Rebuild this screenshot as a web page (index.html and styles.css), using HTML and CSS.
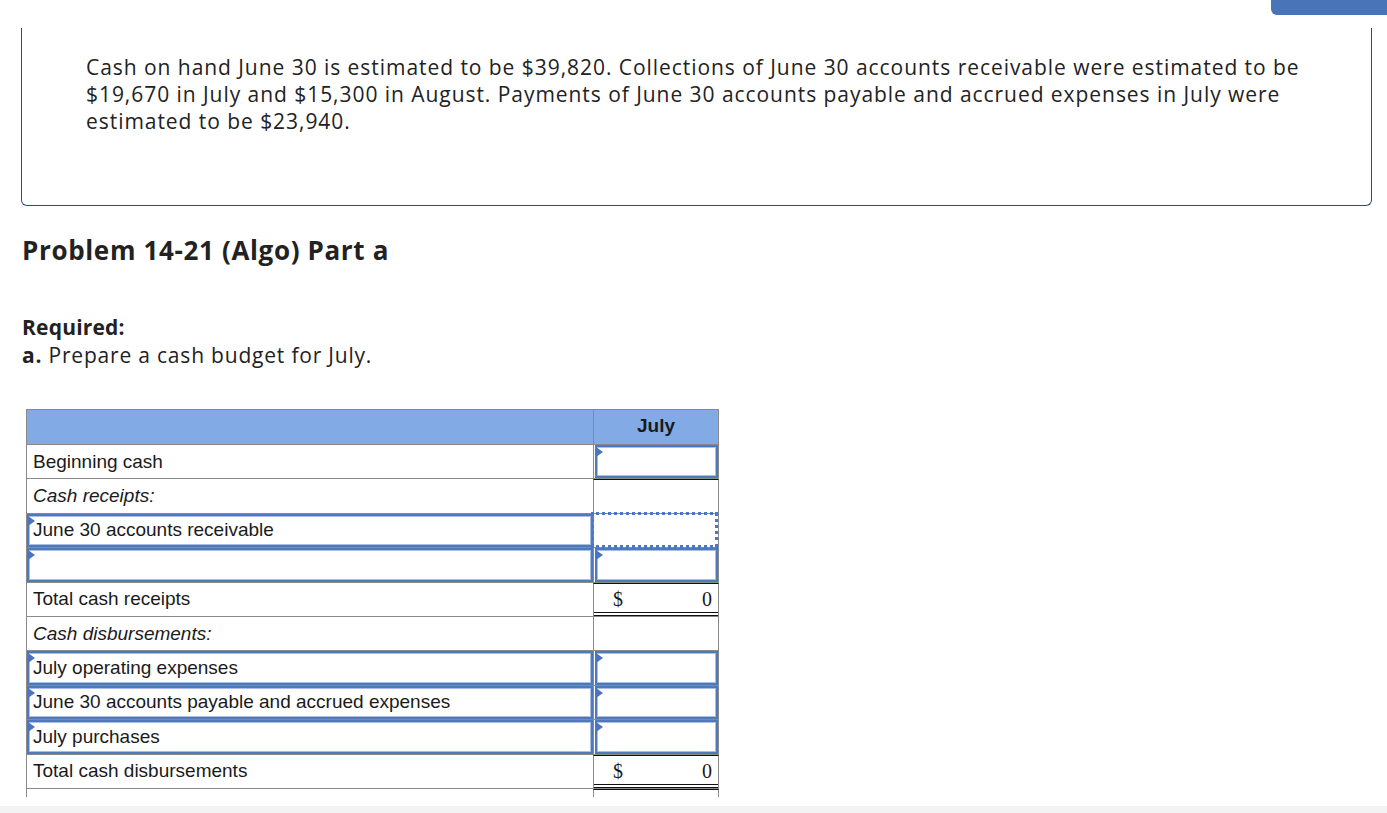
FILE: index.html
```html
<!DOCTYPE html>
<html lang="en">
<head>
<meta charset="utf-8">
<title>Problem 14-21 (Algo) Part a</title>
<link rel="stylesheet" href="styles.css">
</head>
<body>
<div class="tab"></div>
<div class="viewport">
  <div class="intro">
    <p>Cash on hand June 30 is estimated to be $39,820. Collections of June 30 accounts receivable were estimated to be $19,670 in July and $15,300 in August. Payments of June 30 accounts payable and accrued expenses in July were estimated to be $23,940.</p>
  </div>

  <h2 class="title">Problem 14-21 (Algo) Part a</h2>

  <div class="required">
    <div class="req-label">Required:</div>
    <div><b>a.</b> Prepare a cash budget for July.</div>
  </div>

  <div class="sheet">
    <div class="row head">
      <div class="cell label"></div>
      <div class="cell val">July</div>
    </div>
    <div class="row">
      <div class="cell label">Beginning cash</div>
      <div class="cell val"><div class="inp"><span class="tri"></span></div></div>
    </div>
    <div class="row">
      <div class="cell label"><i>Cash receipts:</i></div>
      <div class="cell val topline"></div>
    </div>
    <div class="row">
      <div class="cell label"><div class="inp wide"><span class="tri"></span>June 30 accounts receivable</div></div>
      <div class="cell val"><div class="focus"></div></div>
    </div>
    <div class="row">
      <div class="cell label"><div class="inp wide"><span class="tri"></span></div></div>
      <div class="cell val"><div class="inp"><span class="tri"></span></div></div>
    </div>
    <div class="row">
      <div class="cell label">Total cash receipts</div>
      <div class="cell val total"><span>$</span><span>0</span></div>
    </div>
    <div class="row">
      <div class="cell label"><i>Cash disbursements:</i></div>
      <div class="cell val"></div>
    </div>
    <div class="row">
      <div class="cell label"><div class="inp wide"><span class="tri"></span>July operating expenses</div></div>
      <div class="cell val"><div class="inp"><span class="tri"></span></div></div>
    </div>
    <div class="row">
      <div class="cell label"><div class="inp wide"><span class="tri"></span>June 30 accounts payable and accrued expenses</div></div>
      <div class="cell val"><div class="inp"><span class="tri"></span></div></div>
    </div>
    <div class="row">
      <div class="cell label"><div class="inp wide"><span class="tri"></span>July purchases</div></div>
      <div class="cell val"><div class="inp"><span class="tri"></span></div></div>
    </div>
    <div class="row">
      <div class="cell label">Total cash disbursements</div>
      <div class="cell val total"><span>$</span><span>0</span></div>
    </div>
    <div class="row">
      <div class="cell label"></div>
      <div class="cell val total"><span>$</span><span>0</span></div>
    </div>
  </div>
</div>
<div class="footer"></div>
</body>
</html>
```
FILE: styles.css
```css
* { box-sizing: border-box; }
html, body { margin: 0; padding: 0; background: #fff; }
body {
  font-family: "Open Sans", "Liberation Sans", sans-serif;
  color: #222;
  position: relative;
}
.tab {
  position: absolute;
  top: 0;
  right: 0;
  width: 116px;
  height: 15px;
  background: #4a74b8;
  border-bottom-left-radius: 6px;
  z-index: 2;
}
.viewport {
  height: 797px;
  overflow: hidden;
  padding-top: 28px;
}
.intro {
  margin-left: 21px;
  width: 1351px;
  height: 178px;
  border: 1px solid #2b4a80;
  border-top: none;
  border-radius: 0 0 6px 6px;
  padding: 26px 20px 0 64px;
}
.intro p {
  margin: 0;
  font-size: 21px;
  line-height: 27px;
  letter-spacing: 0.95px;
  color: #222;
}
.title {
  margin: 26px 0 0 22px;
  font-size: 26px;
  line-height: 36px;
  font-weight: 700;
  letter-spacing: 0.65px;
  color: #222;
}
.required {
  margin: 45px 0 0 22px;
  font-size: 21px;
  line-height: 28px;
  letter-spacing: 0.8px;
}
.req-label { font-weight: 700; letter-spacing: 0.2px; }
.sheet {
  margin: 40px 0 0 26px;
  width: 693px;
  font-family: "Liberation Sans", Arial, sans-serif;
  font-size: 19px;
  color: #1a1a1a;
  border-left: 1px solid #8a8a8a;
  border-top: 1px solid #8a8a8a;
}
.row {
  display: grid;
  grid-template-columns: 566px 126px;
  height: 34.4px;
  border-bottom: 1px solid #8a8a8a;
}
.row.head {
  height: 35px;
  background: #82aae5;
}
.cell {
  position: relative;
  display: flex;
  align-items: center;
  height: 100%;
}
.label { padding-left: 6px; }
.val {
  border-left: 1px solid #8a8a8a;
  border-right: 1px solid #8a8a8a;
}
.head .val {
  justify-content: center;
  font-weight: 700;
  padding-bottom: 2px;
}
.label:has(.inp) { padding: 0; }
.inp {
  position: relative;
  width: 100%;
  height: 100%;
  border: 2px solid #4f78bd;
  box-shadow: inset 0 0 0 1px #a7bee6;
  display: flex;
  align-items: center;
  padding-left: 4px;
  background: #fff;
}
.val .inp { margin: 0 0 0 1px; width: calc(100% - 1px); }
.tri {
  position: absolute;
  left: -1px;
  top: 0;
  width: 0;
  height: 0;
  border-top: 5px solid transparent;
  border-bottom: 5px solid transparent;
  border-left: 7px solid #4a74c2;
}
.focus {
  position: absolute;
  left: -3px;
  top: -2px;
  right: 0;
  bottom: -1px;
  border: 3px dotted #4a78c8;
}
.topline { border-top: 1px solid #111; }
.total {
  justify-content: space-between;
  padding: 0 6px 0 19px;
  font-family: "Liberation Serif", "Times New Roman", serif;
  font-size: 20px;
  border-top: 1px solid #111;
}
.total::after {
  content: "";
  position: absolute;
  left: 0;
  right: 0;
  bottom: 0;
  border-bottom: 4px double #111;
}
.footer {
  margin-top: 9px;
  height: 7px;
  background: #f3f3f3;
}
```
